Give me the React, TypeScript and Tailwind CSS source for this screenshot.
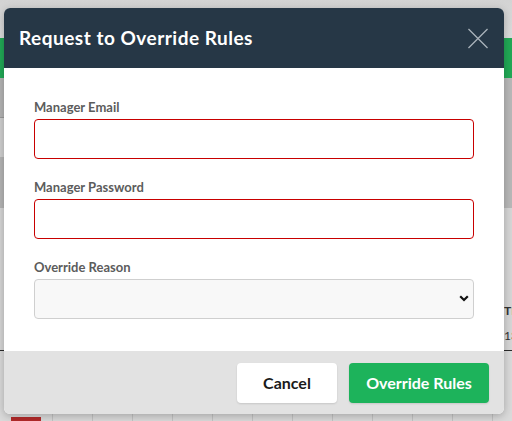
import React from "react";

const font = { fontFamily: "Lato, 'Open Sans', Arial, sans-serif" };

function Field({ label, children }: { label: string; children: React.ReactNode }) {
  return (
    <div className="flex flex-col">
      <label className="mb-[3px] text-[13px] font-bold leading-[17px] text-[#5c5c5c]">{label}</label>
      {children}
    </div>
  );
}

export default function App() {
  return (
    <div className="relative h-[421px] w-[512px] overflow-hidden bg-[#d8d8d8]" style={font}>
      {/* page behind the dimmed overlay */}
      <div className="h-[38px] bg-gradient-to-b from-[#d3d3d3] to-[#dcdcdc]" />
      <div className="h-[40px] bg-[#21a956]" />
      <div className="flex h-[130px]">
        <div className="flex w-[4px] flex-col">
          <div className="h-[40px] border-b border-[#9a9a9a] bg-[#b4b4b4]" />
          <div className="h-[39px] bg-[#cfcfcf]" />
          <div className="flex-1 bg-[#b5b5b5]" />
        </div>
        <div className="flex-1" />
        <div className="w-[8px] bg-[#b8b8b8]" />
      </div>
      <div className="flex h-[142px] justify-end bg-[#d6d6d6]">
        <div className="flex w-[8px] flex-col overflow-hidden whitespace-nowrap pt-[90px] text-[12px] leading-[25px] text-[#333]">
          <span className="font-bold">TI</span>
          <span>13</span>
        </div>
      </div>
      <div className="h-px bg-[#2b2b2b]" />
      <div className="flex h-[70px] items-end bg-[#dadada]">
        <div className="flex h-[8px] w-full">
          <div className="ml-[11px] h-[4px] w-[30px] shrink-0 self-end bg-[#b32a2a]" />
          <div className="ml-[11px] flex flex-1">
            {Array.from({ length: 12 }).map((_, i) => (
              <div key={i} className="h-full w-[40px] shrink-0 border-l border-[#c3c3c3]" />
            ))}
          </div>
        </div>
      </div>

      {/* modal */}
      <div className="absolute left-[4px] top-[8px] w-[500px] overflow-hidden rounded-[6px] bg-white shadow-[0_2px_8px_rgba(0,0,0,0.25)]">
        <div className="flex h-[60px] items-center justify-between bg-[#263746] pl-[15px] pr-[16px]">
          <h2 className="text-[19px] font-bold tracking-[0.5px] text-white">Request to Override Rules</h2>
          <button className="flex h-[20px] w-[20px] items-center justify-center" aria-label="Close">
            <svg width="21" height="21" viewBox="0 0 21 21" fill="none" stroke="#a9b2ba" strokeWidth="1.4">
              <path d="M0.5 0.5 L20.5 20.5 M20.5 0.5 L0.5 20.5" />
            </svg>
          </button>
        </div>

        <div className="flex flex-col gap-[20px] px-[30px] pb-[32px] pt-[31px]">
          <Field label="Manager Email">
            <input className="h-[40px] w-full rounded-[4px] border border-[#c80000] bg-white px-3 outline-none" />
          </Field>
          <Field label="Manager Password">
            <input type="password" className="h-[40px] w-full rounded-[4px] border border-[#c80000] bg-white px-3 outline-none" />
          </Field>
          <Field label="Override Reason">
            <div className="relative">
              <select className="h-[40px] w-full appearance-none rounded-[4px] border border-[#cfcfcf] bg-[#f8f8f8] px-3 outline-none">
                <option value=""></option>
              </select>
              <svg className="pointer-events-none absolute right-[5px] top-[16px]" width="10" height="7" viewBox="0 0 10 7" fill="none" stroke="#111" strokeWidth="2.2">
                <path d="M1.2 1.2 L5 5 L8.8 1.2" />
              </svg>
            </div>
          </Field>
        </div>

        <div className="flex justify-end gap-[12px] bg-[#e2e2e2] pb-[11px] pr-[15px] pt-[12px]">
          <button className="h-[40px] w-[100px] rounded-[4px] bg-white text-[16px] font-bold text-[#1a1a1a] shadow-[0_1px_2px_rgba(0,0,0,0.12)]">
            Cancel
          </button>
          <button className="h-[40px] w-[140px] rounded-[4px] bg-[#1db35b] text-[16px] font-bold text-white shadow-[0_1px_2px_rgba(0,0,0,0.12)]">
            Override Rules
          </button>
        </div>
      </div>
    </div>
  );
}
